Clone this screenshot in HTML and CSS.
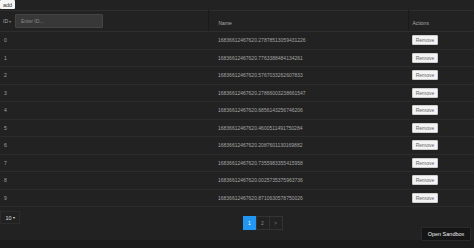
FILE: index.html
```html
<!DOCTYPE html>
<html lang="en">
<head>
  <meta charset="UTF-8" />
  <title>Table</title>
  <link rel="stylesheet" href="styles.css">
</head>
<body>

<button class="add-btn">add</button>

<table class="grid">
  <thead>
    <tr>
      <th class="col-id">
        <div class="id-head">
          <span>ID</span>
          <span class="sort">&#9662;</span>
          <input type="text" placeholder="Enter ID...">
        </div>
      </th>
      <th class="col-name">Name</th>
      <th class="col-actions">Actions</th>
    </tr>
  </thead>
  <tbody>
    <tr><td>0</td><td>16836612467620.27878513059431226</td><td><button class="remove">Remove</button></td></tr>
    <tr><td>1</td><td>16836612467620.7763388484134261</td><td><button class="remove">Remove</button></td></tr>
    <tr><td>2</td><td>16836612467620.5767033262607833</td><td><button class="remove">Remove</button></td></tr>
    <tr><td>3</td><td>16836612467620.27866003238661547</td><td><button class="remove">Remove</button></td></tr>
    <tr><td>4</td><td>16836612467620.6856143256746206</td><td><button class="remove">Remove</button></td></tr>
    <tr><td>5</td><td>16836612467620.4600511491750284</td><td><button class="remove">Remove</button></td></tr>
    <tr><td>6</td><td>16836612467620.2087601130169882</td><td><button class="remove">Remove</button></td></tr>
    <tr><td>7</td><td>16836612467620.7355983355415958</td><td><button class="remove">Remove</button></td></tr>
    <tr><td>8</td><td>16836612467620.0025735375963736</td><td><button class="remove">Remove</button></td></tr>
    <tr><td>9</td><td>16836612467620.8710630578750026</td><td><button class="remove">Remove</button></td></tr>
  </tbody>
</table>

<div class="footer">
  <div class="page-size">10 <span class="caret">&#9662;</span></div>
  <ul class="pager">
    <li class="active">1</li>
    <li>2</li>
    <li>&gt;</li>
  </ul>
</div>

<div class="bottom-bar"></div>
<button class="sandbox-btn">Open Sandbox</button>

</body>
</html>
```

FILE: styles.css
```css
* {
  margin: 0;
  padding: 0;
  box-sizing: border-box;
}

body {
  background: #222;
  color: #bbb;
  font-family: "Liberation Sans", Arial, sans-serif;
  font-size: 5px;
  height: 248px;
  overflow: hidden;
}

.add-btn {
  display: block;
  height: 9px;
  width: 15px;
  background: #f4f4f4;
  border: none;
  border-radius: 1px;
  color: #333;
  font-family: inherit;
  font-size: 5.5px;
}

.grid {
  width: 100%;
  border-collapse: collapse;
  margin-top: 1px;
  border-top: 1px solid #2e2e2e;
}

.grid th {
  height: 21px;
  text-align: left;
  font-weight: normal;
  color: #aaa;
  border-bottom: 1px solid #2e2e2e;
  vertical-align: bottom;
  padding: 0 0 5px 4px;
}

.grid th.col-name {
  padding-left: 10px;
}

.grid th + th {
  border-left: 1px solid #1a1a1a;
}

.col-id {
  width: 208px;
}

.col-actions {
  width: 66px;
}

.grid th.col-id {
  vertical-align: middle;
  padding: 0 0 0 3px;
}

.id-head {
  display: flex;
  align-items: center;
  gap: 1px;
}

.sort {
  font-size: 4px;
  color: #888;
}

.id-head input {
  width: 88px;
  height: 14px;
  margin-left: 3px;
  background: #383838;
  border: 1px solid #444;
  border-radius: 1px;
  color: #ccc;
  font-family: inherit;
  font-size: 5px;
  padding: 0 5px;
}

.id-head input::placeholder {
  color: #888;
}

.grid td {
  height: 17.5px;
  border-bottom: 1px solid #2c2c2c;
  padding: 0 0 0 4px;
  color: #a4a4a4;
  vertical-align: middle;
}

.grid td:nth-child(2) {
  padding-left: 10px;
}

.remove {
  width: 26px;
  height: 10px;
  background: #f4f4f4;
  border: 1px solid #ccc;
  border-radius: 1px;
  color: #666;
  font-family: inherit;
  font-size: 5px;
}

.footer {
  position: relative;
  height: 30px;
}

.page-size {
  position: absolute;
  left: 0;
  top: 4px;
  width: 20px;
  height: 13px;
  border: 1px solid #2c2c2c;
  color: #ddd;
  font-size: 5.5px;
  display: flex;
  align-items: center;
  justify-content: center;
  gap: 1px;
}

.caret {
  font-size: 4px;
}

.pager {
  display: flex;
  justify-content: center;
  list-style: none;
  padding-top: 9px;
  margin-left: 52px;
}

.pager li {
  width: 14px;
  height: 14px;
  display: flex;
  align-items: center;
  justify-content: center;
  border: 1px solid #333;
  margin-left: -1px;
  color: #888;
  font-size: 5px;
}

.pager li.active {
  background: #2196f3;
  border-color: #2196f3;
  color: #fff;
}

.bottom-bar {
  position: fixed;
  left: 0;
  right: 0;
  bottom: 0;
  height: 8px;
  background: #1c1c1c;
}

.sandbox-btn {
  position: fixed;
  right: 3px;
  bottom: 7px;
  width: 50px;
  height: 14px;
  background: #151515;
  border: 1px solid #2a2a2a;
  border-radius: 1px;
  color: #eee;
  font-family: inherit;
  font-size: 5.5px;
}
```
